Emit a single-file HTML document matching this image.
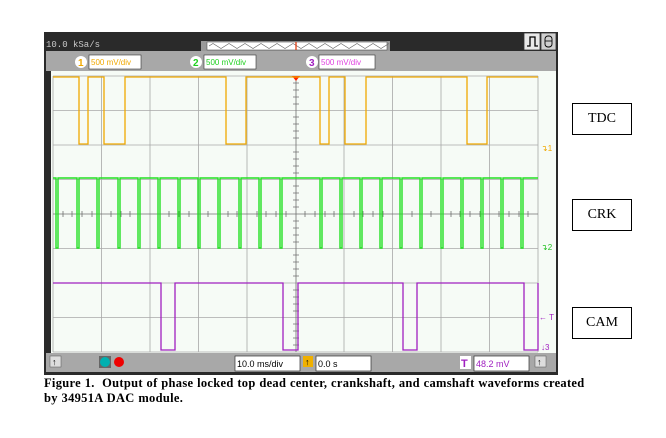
<!DOCTYPE html>
<html><head><meta charset="utf-8"><style>
html,body{margin:0;padding:0;background:#fff;width:666px;height:438px;overflow:hidden}
svg{position:absolute;left:0;top:0}
.cap{position:absolute;left:44px;top:376px;font-family:"Liberation Serif",serif;font-weight:bold;font-size:12.5px;line-height:15px;color:#000;letter-spacing:0.3px;word-spacing:0.3px;white-space:nowrap}
.lab{position:absolute;width:58px;height:30px;border:1px solid #000;font-family:"Liberation Serif",serif;font-size:14px;line-height:30px;text-align:center;left:572px}
</style></head><body>
<svg width="666" height="438" viewBox="0 0 666 438" font-family="Liberation Sans, sans-serif">
<rect x="44" y="32" width="514" height="343" fill="#2a2a2a"/>
<rect x="46" y="51" width="510" height="20" fill="#a8a8a8"/>
<rect x="51" y="71" width="505" height="282" fill="#f6fbf6"/>
<rect x="46" y="353" width="510" height="19" fill="#a8a8a8"/>
<text x="46" y="47" font-family="Liberation Mono, monospace" font-size="9" fill="#c8c8c8">10.0 kSa/s</text>
<rect x="201" y="41" width="189" height="10" fill="#9a9a9a"/>
<rect x="207" y="42" width="180" height="8" fill="#fff" stroke="#555" stroke-width="0.6"/>
<path d="M209 46 l4 -2.5 4 2.5 4 2.5 4 -2.5 4 -2.5 4 2.5 4 2.5 4 -2.5 4 -2.5 4 2.5 4 2.5 4 -2.5 4 -2.5 4 2.5 4 2.5 4 -2.5 4 -2.5 4 2.5 4 2.5 4 -2.5 4 -2.5 4 2.5 4 2.5 4 -2.5 4 -2.5 4 2.5 4 2.5 4 -2.5 4 -2.5 4 2.5 4 2.5 4 -2.5 4 -2.5 4 2.5 4 2.5 4 -2.5 4 -2.5 4 2.5 4 2.5 4 -2.5 4 -2.5 4 2.5 4 2.5 4 -2.5 4 -2.5" fill="none" stroke="#666" stroke-width="0.7"/>
<line x1="296" y1="42" x2="296" y2="50" stroke="#e03000" stroke-width="1.2"/>
<rect x="524" y="33" width="16" height="17" fill="#e8e8e8" stroke="#333" stroke-width="0.8"/>
<path d="M527 46 h3 v-9 h5 v9 h3" fill="none" stroke="#000" stroke-width="1.3"/>
<rect x="541" y="33" width="15" height="17" fill="#d0d0d0" stroke="#333" stroke-width="0.8"/>
<rect x="545" y="36" width="7" height="11" rx="3" fill="none" stroke="#000" stroke-width="0.9"/>
<line x1="545" y1="41" x2="552" y2="41" stroke="#000" stroke-width="0.8"/>
<circle cx="81" cy="62" r="6" fill="#fff"/><text x="78" y="66" font-size="10" font-weight="bold" fill="#f0a800">1</text>
<rect x="89" y="55" width="52" height="14" fill="#fff" stroke="#333" stroke-width="0.6"/>
<text x="91" y="65" font-size="8" fill="#f0a800">500 mV/div</text>
<circle cx="196" cy="62" r="6" fill="#fff"/><text x="193" y="66" font-size="10" font-weight="bold" fill="#20d020">2</text>
<rect x="204" y="55" width="52" height="14" fill="#fff" stroke="#333" stroke-width="0.6"/>
<text x="206" y="65" font-size="8" fill="#20d020">500 mV/div</text>
<circle cx="312" cy="62" r="6" fill="#fff"/><text x="309" y="66" font-size="10" font-weight="bold" fill="#a020c0">3</text>
<rect x="319" y="55" width="56" height="14" fill="#fff" stroke="#333" stroke-width="0.6"/>
<text x="321" y="65" font-size="8" fill="#e040e0">500 mV/div</text>
<g stroke="#a8a8a8" stroke-width="0.8">
<line x1="53" y1="76" x2="53" y2="352"/><line x1="101.5" y1="76" x2="101.5" y2="352"/><line x1="150" y1="76" x2="150" y2="352"/><line x1="198.5" y1="76" x2="198.5" y2="352"/><line x1="247" y1="76" x2="247" y2="352"/><line x1="344" y1="76" x2="344" y2="352"/><line x1="392.5" y1="76" x2="392.5" y2="352"/><line x1="441" y1="76" x2="441" y2="352"/><line x1="489.5" y1="76" x2="489.5" y2="352"/><line x1="538" y1="76" x2="538" y2="352"/>
<line x1="53" y1="76" x2="538" y2="76"/><line x1="53" y1="110.5" x2="538" y2="110.5"/><line x1="53" y1="145" x2="538" y2="145"/><line x1="53" y1="179.5" x2="538" y2="179.5"/><line x1="53" y1="248.5" x2="538" y2="248.5"/><line x1="53" y1="283" x2="538" y2="283"/><line x1="53" y1="317.5" x2="538" y2="317.5"/><line x1="53" y1="352" x2="538" y2="352"/>
</g>
<g stroke="#707070" stroke-width="0.8">
<line x1="296" y1="76" x2="296" y2="352"/><line x1="53" y1="214" x2="538" y2="214"/>
<path d="M293 83h6M293 90h6M293 97h6M293 104h6M293 117h6M293 124h6M293 131h6M293 138h6M293 152h6M293 159h6M293 166h6M293 173h6M293 186h6M293 193h6M293 200h6M293 207h6M293 221h6M293 228h6M293 235h6M293 242h6M293 255h6M293 262h6M293 269h6M293 276h6M293 290h6M293 297h6M293 304h6M293 311h6M293 324h6M293 331h6M293 338h6M293 345h6"/>
<path d="M63 211v6M72 211v6M82 211v6M92 211v6M111 211v6M121 211v6M130 211v6M140 211v6M160 211v6M169 211v6M179 211v6M189 211v6M208 211v6M218 211v6M228 211v6M237 211v6M257 211v6M266 211v6M276 211v6M286 211v6M305 211v6M315 211v6M325 211v6M334 211v6M354 211v6M363 211v6M373 211v6M383 211v6M402 211v6M412 211v6M422 211v6M431 211v6M451 211v6M460 211v6M470 211v6M480 211v6M499 211v6M509 211v6M519 211v6M528 211v6"/>
</g>
<path d="M292 76 h8 l-4 5z" fill="#ff2000"/>
<path d="M53 77 H79 V144 H88 V77 H104 V144 H125 V77 H226 V144 H246 V77 H320 V144 H329 V77 H345 V144 H366 V77 H467 V144 H487 V77 H538" fill="none" stroke="#f0a800" stroke-width="1.3"/>
<path d="M53 178 H56 V248 H58 V178 H77 V248 H79 V178 H97 V248 H99 V178 H118 V248 H120 V178 H138 V248 H140 V178 H158 V248 H160 V178 H178 V248 H180 V178 H198 V248 H200 V178 H218 V248 H220 V178 H239 V248 H241 V178 H259 V248 H261 V178 H280 V248 H282 V178 H320 V248 H322 V178 H340 V248 H342 V178 H360 V248 H362 V178 H380 V248 H382 V178 H400 V248 H402 V178 H420 V248 H422 V178 H441 V248 H443 V178 H461 V248 H463 V178 H481 V248 H483 V178 H501 V248 H503 V178 H521 V248 H523 V178 H538" fill="none" stroke="#22e022" stroke-width="1.4"/>
<path d="M53 283 H161 V350 H175 V283 H283 V350 H298 V283 H403 V350 H417 V283 H524 V350 H538 V283" fill="none" stroke="#a020c0" stroke-width="1.3"/>
<text x="541" y="151" font-size="8" fill="#f0a800">↴1</text>
<text x="541" y="250" font-size="8" fill="#22c022">↴2</text>
<text x="539" y="320" font-size="8" fill="#a020c0">← T</text>
<text x="541" y="350" font-size="8" fill="#a020c0">↓3</text>
<rect x="50" y="356" width="11" height="11" fill="#ddd" stroke="#555" stroke-width="0.5"/><text x="52" y="365" font-size="9">↑</text>
<rect x="99" y="356" width="12" height="12" fill="#666"/><circle cx="105" cy="362" r="5" fill="#00b0b0"/>
<circle cx="119" cy="362" r="5" fill="#ee0000"/>
<rect x="235" y="356" width="65" height="15" fill="#fff" stroke="#333" stroke-width="0.7"/><text x="237" y="367" font-size="9">10.0 ms/div</text>
<rect x="303" y="356" width="10" height="11" fill="#f0b000"/><text x="305" y="365" font-size="9">↑</text>
<rect x="316" y="356" width="55" height="15" fill="#fff" stroke="#333" stroke-width="0.7"/><text x="318" y="367" font-size="9">0.0 s</text>
<rect x="460" y="356" width="11" height="13" fill="#fff"/><text x="461" y="367" font-size="11" font-weight="bold" fill="#a020c0">T</text>
<rect x="474" y="356" width="55" height="15" fill="#fff" stroke="#333" stroke-width="0.7"/><text x="476" y="367" font-size="9" fill="#a020c0">48.2 mV</text>
<rect x="535" y="356" width="11" height="11" fill="#ddd" stroke="#555" stroke-width="0.5"/><text x="537" y="365" font-size="9">↑</text>
</svg>
<div class="lab" style="top:103px">TDC</div>
<div class="lab" style="top:199px">CRK</div>
<div class="lab" style="top:307px">CAM</div>
<div class="cap">Figure 1.&nbsp; Output of phase locked top dead center, crankshaft, and camshaft waveforms created<br>by 34951A DAC module.</div>
</body></html>
